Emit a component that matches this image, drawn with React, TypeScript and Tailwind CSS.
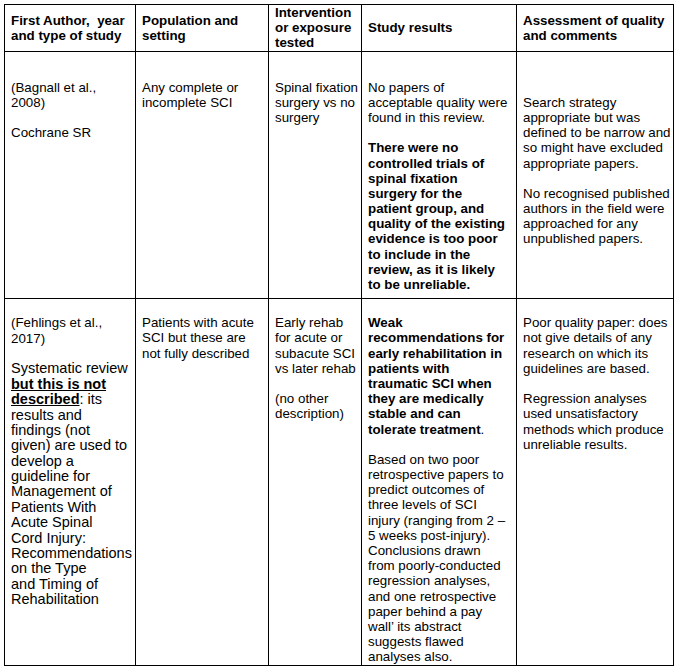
import React from "react";

type Seg = string | { t: string; b?: boolean; u?: boolean };
type Line = string | Seg[];

function Lines({ lines, bold, big, tall }: { lines: Line[]; bold?: boolean; big?: boolean; tall?: boolean }) {
  return (
    <>
      {lines.map((line, i) => {
        if (line === "") return <div key={i} className={tall ? "h-[15.4px]" : "h-[15.2px]"} />;
        const segs: Seg[] = typeof line === "string" ? [line] : line;
        return (
          <div
            key={i}
            className={
              "whitespace-pre " +
              (tall ? "h-[15.4px] leading-[15.4px] " : "h-[15.2px] leading-[15.2px] ") +
              (big ? "text-[14.5px] " : "text-[13.33px] ") +
              (bold ? "font-bold" : "")
            }
          >
            {segs.map((s, j) =>
              typeof s === "string" ? (
                <span key={j}>{s}</span>
              ) : (
                <span key={j} className={(s.b ? "font-bold " : "") + (s.u ? "underline" : "")}>
                  {s.t}
                </span>
              )
            )}
          </div>
        );
      })}
    </>
  );
}

export default function App() {
  return (
    <div className="bg-white w-[680px] h-[672px] pt-[4px] pl-[4px] text-black font-['Liberation_Sans',Arial,sans-serif]">
      <div className="grid grid-cols-[130px_132px_92px_154px_156px] gap-px bg-black p-px w-[670px]">
        {/* Header */}
        <div className="bg-white px-[6px] flex flex-col justify-center">
          <Lines bold lines={["First Author,  year", "and type of study"]} />
        </div>
        <div className="bg-white px-[6px] flex flex-col justify-center">
          <Lines bold lines={["Population and", "setting"]} />
        </div>
        <div className="bg-white px-[6px] flex flex-col justify-center">
          <Lines bold lines={["Intervention", "or exposure", "tested"]} />
        </div>
        <div className="bg-white px-[6px] flex flex-col justify-center">
          <Lines bold lines={["Study results"]} />
        </div>
        <div className="bg-white px-[6px] flex flex-col justify-center">
          <Lines bold lines={["Assessment of quality", "and comments"]} />
        </div>

        {/* Row 1 */}
        <div className="bg-white px-[6px] pt-[28px] pb-[6px]">
          <Lines lines={["(Bagnall et al.,", "2008)", "", "Cochrane SR"]} />
        </div>
        <div className="bg-white px-[6px] pt-[28px] pb-[6px]">
          <Lines lines={["Any complete or", "incomplete SCI"]} />
        </div>
        <div className="bg-white px-[6px] pt-[28px] pb-[6px]">
          <Lines lines={["Spinal fixation", "surgery vs no", "surgery"]} />
        </div>
        <div className="bg-white px-[6px] pt-[28px] pb-[6px]">
          <Lines lines={["No papers of", "acceptable quality were", "found in this review.", ""]} />
          <Lines
            bold
            lines={[
              "There were no",
              "controlled trials of",
              "spinal fixation",
              "surgery for the",
              "patient group, and",
              "quality of the existing",
              "evidence is too poor",
              "to include in the",
              "review, as it is likely",
              "to be unreliable.",
            ]}
          />
        </div>
        <div className="bg-white px-[6px] pt-[28px] pb-[6px]">
          <Lines
            lines={[
              "",
              "Search strategy",
              "appropriate but was",
              "defined to be narrow and",
              "so might have excluded",
              "appropriate papers.",
              "",
              "No recognised published",
              "authors in the field were",
              "approached for any",
              "unpublished papers.",
            ]}
          />
        </div>

        {/* Row 2 */}
        <div className="bg-white px-[6px] pt-[16px]">
          <Lines tall lines={["(Fehlings et al.,", "2017)", ""]} />
          <Lines
            big
            tall
            lines={[
              "Systematic review",
              [{ t: "but this is not", b: true, u: true }],
              [{ t: "described", b: true, u: true }, ": its"],
              "results and",
              "findings (not",
              "given) are used to",
              "develop a",
              "guideline for",
              "Management of",
              "Patients With",
              "Acute Spinal",
              "Cord Injury:",
              "Recommendations",
              "on the Type",
              "and Timing of",
              "Rehabilitation",
            ]}
          />
        </div>
        <div className="bg-white px-[6px] pt-[16px]">
          <Lines lines={["Patients with acute", "SCI but these are", "not fully described"]} />
        </div>
        <div className="bg-white px-[6px] pt-[16px]">
          <Lines
            lines={["Early rehab", "for acute or", "subacute SCI", "vs later rehab", "", "(no other", "description)"]}
          />
        </div>
        <div className="bg-white px-[6px] pt-[16px]">
          <Lines
            bold
            lines={[
              "Weak",
              "recommendations for",
              "early rehabilitation in",
              "patients with",
              "traumatic SCI when",
              "they are medically",
              "stable and can",
            ]}
          />
          <Lines lines={[[{ t: "tolerate treatment", b: true }, "."], ""]} />
          <Lines
            lines={[
              "Based on two poor",
              "retrospective papers to",
              "predict outcomes of",
              "three levels of SCI",
              "injury (ranging from 2 –",
              "5 weeks post-injury).",
              "Conclusions drawn",
              "from poorly-conducted",
              "regression analyses,",
              "and one retrospective",
              "paper behind a pay",
              "wall’ its abstract",
              "suggests flawed",
              "analyses also.",
            ]}
          />
        </div>
        <div className="bg-white px-[6px] pt-[16px]">
          <Lines
            lines={[
              "Poor quality paper: does",
              "not give details of any",
              "research on which its",
              "guidelines are based.",
              "",
              "Regression analyses",
              "used unsatisfactory",
              "methods which produce",
              "unreliable results.",
            ]}
          />
        </div>
      </div>
    </div>
  );
}
